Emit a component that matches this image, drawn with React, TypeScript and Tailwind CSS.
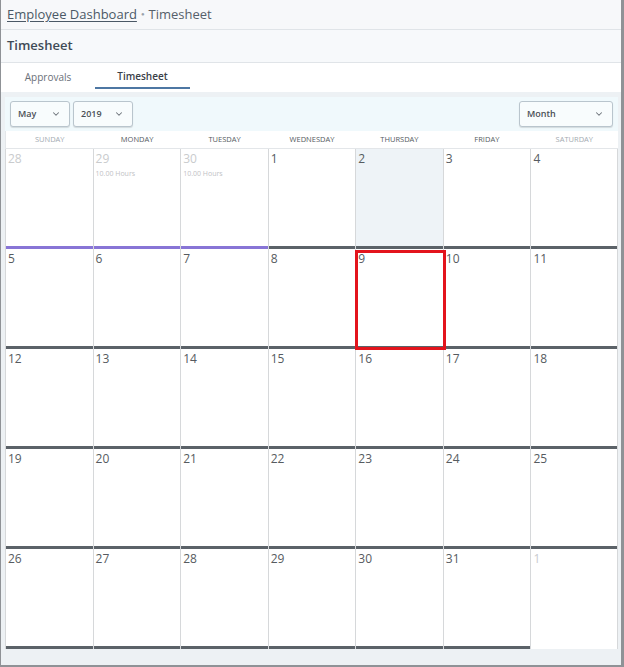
import { ChevronDown } from "lucide-react";

const days = ["Sunday", "Monday", "Tuesday", "Wednesday", "Thursday", "Friday", "Saturday"];

type Cell = { day: number; other?: boolean; hours?: string; today?: boolean; selected?: boolean };

const weeks: Cell[][] = [
    [
        { day: 28, other: true },
        { day: 29, other: true, hours: "10.00 Hours" },
        { day: 30, other: true, hours: "10.00 Hours" },
        { day: 1 },
        { day: 2, today: true },
        { day: 3 },
        { day: 4 },
    ],
    [{ day: 5 }, { day: 6 }, { day: 7 }, { day: 8 }, { day: 9, selected: true }, { day: 10 }, { day: 11 }],
    [{ day: 12 }, { day: 13 }, { day: 14 }, { day: 15 }, { day: 16 }, { day: 17 }, { day: 18 }],
    [{ day: 19 }, { day: 20 }, { day: 21 }, { day: 22 }, { day: 23 }, { day: 24 }, { day: 25 }],
    [{ day: 26 }, { day: 27 }, { day: 28 }, { day: 29 }, { day: 30 }, { day: 31 }, { day: 1, other: true }],
];

function Select({ label, width }: { label: string; width: string }) {
    return (
        <div className={`${width} h-[26px] flex items-center justify-between pl-[7px] pr-[8px] rounded-[3px] border border-[#b9c5cd] bg-[#f8fcfd] shadow-[0_1px_1px_rgba(0,0,0,0.12)]`}>
            <span className="text-[9px] font-semibold text-[#4a4f55]">{label}</span>
            <ChevronDown className="w-[10px] h-[10px] text-[#6b7178]" strokeWidth={2.5} />
        </div>
    );
}

export default function App() {
    return (
        <div className="w-[624px] h-[667px] flex flex-col bg-[#edf1f4] border-l border-r-[3px] border-b-2 border-[#8f9296] font-['Open_Sans',sans-serif]">
            {/* breadcrumb */}
            <div className="h-[30px] shrink-0 flex items-center px-[6px] bg-[#f7f8fa] border-b border-[#e0e4e8]">
                <span className="text-[13px] text-[#4b5866] underline underline-offset-2">Employee Dashboard</span>
                <span className="mx-[4px] text-[6px] text-[#9aa2aa]">●</span>
                <span className="text-[13px] text-[#56606a]">Timesheet</span>
            </div>

            {/* title */}
            <div className="h-[33px] shrink-0 flex items-center px-[6px] bg-[#f7f9fb] border-b border-[#e0e4e8]">
                <span className="text-[13px] font-semibold text-[#3f4b57]">Timesheet</span>
            </div>

            {/* tabs */}
            <div className="h-[29px] shrink-0 flex bg-white">
                <div className="w-[94px] flex items-center justify-center text-[10px] text-[#6a7078]">Approvals</div>
                <div className="w-[95px] flex items-center justify-center pt-[2px] text-[10px] font-semibold text-[#3a4048] border-b-2 border-[#4e77a3] mb-[3px]">
                    Timesheet
                </div>
            </div>

            {/* calendar */}
            <div className="flex-1 flex flex-col pt-[5px] pl-[4px] pr-[3px]">
                <div className="h-[34px] shrink-0 flex items-center justify-between px-[5px] bg-[#f0f9fc]">
                    <div className="flex gap-[3px]">
                        <Select label="May" width="w-[60px]" />
                        <Select label="2019" width="w-[60px]" />
                    </div>
                    <Select label="Month" width="w-[94px]" />
                </div>

                <div className="h-[18px] shrink-0 grid grid-cols-7 bg-white border-b border-[#e3e6e9] border-l border-[#d8dcdf]">
                    {days.map((d, i) => (
                        <div
                            key={d}
                            className={`flex items-center justify-center text-[7.5px] uppercase ${
                                i === 0 || i === 6 ? "text-[#a4abb2]" : "text-[#555b61]"
                            }`}
                        >
                            {d}
                        </div>
                    ))}
                </div>

                {weeks.map((week, wi) => (
                    <div key={wi} className="h-[100px] shrink-0 grid grid-cols-7 bg-white">
                        {week.map((c, ci) => {
                            const bar = c.other && wi === 0 ? "bg-[#8875d6]" : c.other ? "bg-white" : "bg-[#5b6268]";
                            return (
                                <div
                                    key={ci}
                                    className={`relative flex flex-col border-l border-[#d6d8da] ${ci === 6 ? "border-r" : ""} ${
                                        c.today ? "bg-[#eef3f7]" : "bg-white"
                                    }`}
                                >
                                    <div className="flex-1 px-[2px] pt-[2px]">
                                        <div className={`text-[12px] leading-[16px] ${c.other ? "text-[#c9cbcd]" : "text-[#565b60]"}`}>
                                            {c.day}
                                        </div>
                                        {c.hours && <div className="mt-[2px] text-[7px] text-[#bfc2c5]">{c.hours}</div>}
                                    </div>
                                    <div className={`h-[3px] ${bar}`} />
                                    {c.selected && (
                                        <div className="absolute z-10 left-[-1px] top-[1px] right-[-3px] bottom-[-1px] border-[3px] border-[#e3141c]" />
                                    )}
                                </div>
                            );
                        })}
                    </div>
                ))}
            </div>
        </div>
    );
}
